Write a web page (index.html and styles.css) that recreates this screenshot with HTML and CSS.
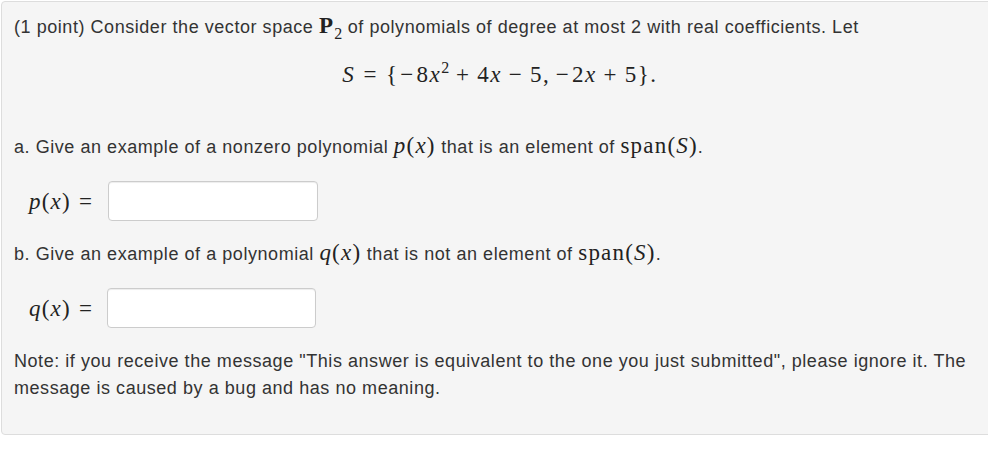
FILE: index.html
```html
<!DOCTYPE html>
<html>
<head>
<meta charset="utf-8">
<link rel="stylesheet" href="styles.css">
</head>
<body>
<div class="panel">
  <p class="line">(1 point) Consider the vector space <span class="m"><b class="bold">P</b><sub>2</sub></span> of polynomials of degree at most 2 with real coefficients. Let</p>
  <div class="display"><span class="m"><i>S</i><span class="rel">=</span>{<span class="un">−</span>8<i>x</i><sup>2</sup><span class="op">+</span>4<i>x</i><span class="op">−</span>5,<span class="thin"></span><span class="un">−</span>2<i>x</i><span class="op">+</span>5}.</span></div>
  <p class="line part-a">a. Give an example of a nonzero polynomial <span class="m"><i>p</i>(<i>x</i>)</span> that is an element of <span class="m">span(<i>S</i>)</span>.</p>
  <div class="answer"><span class="m label"><i>p</i>(<i>x</i>)<span class="rel">=</span></span><span class="box"></span></div>
  <p class="line part-b">b. Give an example of a polynomial <span class="m"><i>q</i>(<i>x</i>)</span> that is not an element of <span class="m">span(<i>S</i>)</span>.</p>
  <div class="answer"><span class="m label"><i>q</i>(<i>x</i>)<span class="rel">=</span></span><span class="box second"></span></div>
  <p class="line note">Note: if you receive the message "This answer is equivalent to the one you just submitted", please ignore it. The message is caused by a bug and has no meaning.</p>
</div>
</body>
</html>
```
FILE: styles.css
```css
html, body {
  margin: 0;
  padding: 0;
  background: #ffffff;
  overflow: hidden;
}
body {
  font-family: "Liberation Sans", Arial, sans-serif;
  font-size: 18px;
  letter-spacing: 0.55px;
  color: #333333;
}
.panel {
  margin: 1px 0 0 1px;
  width: 1000px;
  box-sizing: border-box;
  background: #f5f5f5;
  border: 1px solid #dddddd;
  border-radius: 4px;
  padding: 12px 14px 32px 12px;
}
.line {
  margin: 0;
  line-height: 27px;
}
.m {
  font-family: "Liberation Serif", "Times New Roman", serif;
  font-size: 23px;
  letter-spacing: 1.2px;
  line-height: 0;
  color: #222222;
}
.m i { font-style: italic; }
.bold { font-weight: bold; }
.m sub, .m sup { font-size: 16px; line-height: 0; letter-spacing: 0; }
.rel {
  display: inline-block;
  width: 0.778em;
  text-align: center;
  margin: 0 0.278em;
}
.op {
  display: inline-block;
  width: 0.778em;
  text-align: center;
  margin: 0 0.222em;
}
.un {
  display: inline-block;
  width: 0.778em;
  text-align: center;
}
.thin {
  display: inline-block;
  width: 0.167em;
}
.display {
  margin-top: 19px;
  height: 30px;
  line-height: 30px;
  text-align: center;
  padding-right: 0;
}
.display .m { font-size: 23px; line-height: 30px; letter-spacing: 1.5px; }
.part-a { margin-top: 44px; }
.part-b { margin-top: 20px; }
.answer {
  display: flex;
  align-items: center;
  padding-left: 15px;
  margin-top: 20px;
  height: 40px;
}
.label {
  width: 79px;
  flex: none;
  line-height: 1;
  white-space: nowrap;
}
.label .rel { margin-right: 0; }
.box {
  display: block;
  width: 210px;
  height: 40px;
  box-sizing: border-box;
  background: #ffffff;
  border: 1px solid #cccccc;
  border-radius: 4px;
  box-shadow: inset 0 1px 1px rgba(0,0,0,0.075);
}
.box.second { margin-left: -1px; width: 209px; }
.note { margin-top: 20px; }
```
